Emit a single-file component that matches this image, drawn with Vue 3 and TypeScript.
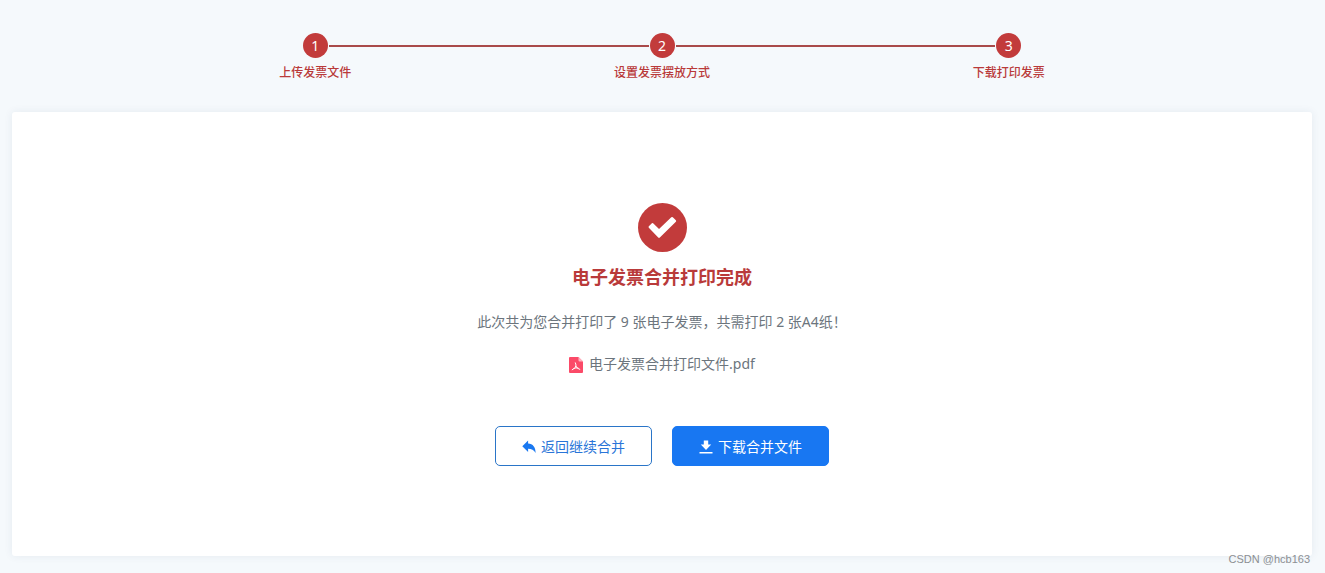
<script setup lang="ts">
interface Step {
  id: number
  label: string
}

const steps: Step[] = [
  { id: 1, label: '上传发票文件' },
  { id: 2, label: '设置发票摆放方式' },
  { id: 3, label: '下载打印发票' },
]

const invoiceCount = 9
const sheetCount = 2
const fileName = '电子发票合并打印文件.pdf'
</script>

<template>
  <div class="page">
    <ol class="steps">
      <li v-for="step in steps" :key="step.id" class="step">
        <div class="track">
          <span class="line"></span>
          <span class="dot">{{ step.id }}</span>
          <span class="line"></span>
        </div>
        <span class="label">{{ step.label }}</span>
      </li>
    </ol>

    <main class="panel">
      <svg class="done" viewBox="0 0 48 48" aria-hidden="true">
        <circle cx="24" cy="24" r="24" fill="#c23b3b" />
        <path
          d="M10.6 22.8 L13.6 19.8 Q14.2 19.2 14.8 19.8 L20.6 25.4 L32.6 14 Q33.4 13.3 34.1 14 L37.1 17 Q37.8 17.7 37.1 18.4 L21.4 33.8 Q20.6 34.6 19.8 33.8 L10.6 24.2 Q10 23.5 10.6 22.8 Z"
          fill="#fff"
        />
      </svg>
      <h1 class="title">电子发票合并打印完成</h1>
      <p class="summary">此次共为您合并打印了 {{ invoiceCount }} 张电子发票，共需打印 {{ sheetCount }} 张A4纸！</p>
      <p class="file">
        <svg class="pdf" viewBox="0 0 14 16" aria-hidden="true">
          <path d="M1 0 H9.5 L14 4.5 V15 Q14 16 13 16 H1 Q0 16 0 15 V1 Q0 0 1 0 Z" fill="#fb4a68" />
          <path d="M9.5 0 L14 4.5 H10.5 Q9.5 4.5 9.5 3.5 Z" fill="#ffb3c0" />
          <path
            d="M6.4 5.8 Q7.8 8.4 6.4 10.2 Q5 12 3.2 12.8 M6.9 9.2 Q8 11.8 10.8 12.4 M4.8 11.4 Q7 10.4 9 11"
            fill="none"
            stroke="#fff"
            stroke-width="1"
            stroke-linecap="round"
          />
        </svg>
        <span>{{ fileName }}</span>
      </p>
      <div class="actions">
        <button type="button" class="btn outline">
          <svg class="icon" viewBox="0 0 14 14" aria-hidden="true">
            <path d="M6.1 0.6 V3.6 C11 3.8 13.6 7.4 13.6 13 C11.8 10 9.6 8.8 6.1 8.8 V11.9 L0.3 6.2 Z" fill="#1a78f0" />
          </svg>
          <span>返回继续合并</span>
        </button>
        <button type="button" class="btn solid">
          <svg class="icon" viewBox="0 0 14 14" aria-hidden="true">
            <path d="M4.8 0.4 H9.2 V4.6 H12.2 L7 10 L1.8 4.6 H4.8 Z M0.5 12 H13.5 V13.6 H0.5 Z" fill="#fff" />
          </svg>
          <span>下载合并文件</span>
        </button>
      </div>
    </main>

    <span class="watermark">CSDN @hcb163</span>
  </div>
</template>

<style>
body {
  background: #f5f9fc;
}
</style>

<style scoped>
.page {
  position: relative;
  box-sizing: border-box;
  min-height: 100vh;
  padding: 33px 13px 17px 12px;
  font-family: "Noto Sans", "Noto Sans CJK SC", sans-serif;
  font-size: 14px;
  color: #6c757d;
}

.steps {
  display: flex;
  width: 80%;
  margin: 0 auto;
  padding: 0;
  list-style: none;
}

.step {
  flex: 1;
  display: flex;
  flex-direction: column;
  align-items: center;
}

.track {
  display: flex;
  align-items: center;
  align-self: stretch;
  gap: 1px;
}

.line {
  flex: 1;
  height: 2px;
  background: #a94a4a;
}

.step:first-child .line:first-child,
.step:last-child .line:last-child {
  background: transparent;
}

.dot {
  width: 25px;
  height: 25px;
  border-radius: 50%;
  background: #c23b3b;
  color: #fff;
  line-height: 25px;
  text-align: center;
}

.label {
  margin-top: 5px;
  font-size: 12px;
  font-weight: 500;
  line-height: 20px;
  color: #b93a3a;
}

.panel {
  display: flex;
  flex-direction: column;
  align-items: center;
  margin-top: 29px;
  padding: 91px 20px 90px;
  border-radius: 3px;
  background: #fff;
  box-shadow: 0 0 8px rgba(40, 70, 100, 0.08);
}

.done {
  width: 49px;
  height: 49px;
}

.title {
  margin: 12px 0 0;
  font-size: 18px;
  font-weight: 700;
  line-height: 26px;
  color: #b93a3a;
}

.summary {
  margin: 21px 0 0;
  line-height: 22px;
}

.file {
  display: flex;
  align-items: center;
  gap: 6px;
  margin: 20px 0 0;
  line-height: 22px;
}

.pdf {
  width: 14px;
  height: 16px;
  margin-top: 2px;
}

.actions {
  display: flex;
  gap: 20px;
  margin-top: 51px;
}

.btn {
  display: flex;
  align-items: center;
  justify-content: center;
  gap: 5px;
  height: 40px;
  padding: 2px 26px 0;
  border: 1px solid #1877f2;
  border-radius: 5px;
  font: inherit;
  line-height: 22px;
  cursor: pointer;
}

.outline {
  border-color: #2a75c8;
  background: #fff;
  color: #2a75d8;
}

.solid {
  background: #1877f2;
  color: #fff;
}

.icon {
  width: 14px;
  height: 14px;
}

.watermark {
  position: absolute;
  right: 15px;
  bottom: 6px;
  font-family: "Liberation Sans", sans-serif;
  font-size: 11px;
  line-height: 16px;
  color: #8c8f93;
}
</style>
